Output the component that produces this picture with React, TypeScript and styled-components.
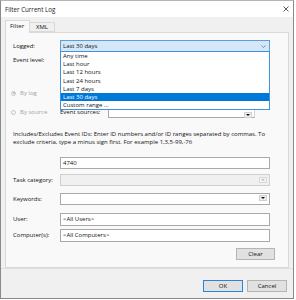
import React from 'react';
import styled, { createGlobalStyle } from 'styled-components';

const Global = createGlobalStyle`
  html, body { margin: 0; padding: 0; background: #ffffff; }
  body {
    font-family: "Open Sans", "Noto Sans", sans-serif;
    font-size: 6px;
    color: #111111;
  }
  * { box-sizing: border-box; }
`;

const Window = styled.div`
  width: 294px;
  height: 299px;
  border: 1px solid #8a8a8a;
  border-top-color: #b4b4b4;
  background: #f0f0f0;
  display: flex;
  flex-direction: column;
`;

const TitleBar = styled.div`
  height: 16px;
  background: #ffffff;
  display: flex;
  align-items: center;
  justify-content: space-between;
  padding: 0 4px 0 4px;
`;

const Title = styled.span`
  font-size: 6.2px;
  color: #222;
`;

const TabStrip = styled.div`
  display: flex;
  align-items: flex-start;
  height: 13px;
  margin-top: 3px;
  margin-bottom: -1px;
  padding-left: 4px;
  position: relative;
  z-index: 2;
`;

const Tab = styled.div<{ $active?: boolean }>`
  width: 25px;
  height: ${p => (p.$active ? 13 : 10)}px;
  margin-top: ${p => (p.$active ? 0 : 2)}px;
  border: 1px solid #d9d9d9;
  border-bottom: ${p => (p.$active ? 'none' : '1px solid #d9d9d9')};
  border-left: ${p => (p.$active ? '1px solid #d9d9d9' : 'none')};
  background: ${p => (p.$active ? '#f9f9f9' : '#f0f0f0')};
  padding-left: ${p => (p.$active ? 4 : 6)}px;
  line-height: ${p => (p.$active ? 11 : 8)}px;
`;

const Panel = styled.div`
  margin: 0 4px;
  height: 236px;
  border: 1px solid #d9d9d9;
  background: #f9f9f9;
  padding: 7px 18px 7px 7px;
  display: flex;
  flex-direction: column;
  position: relative;
  z-index: 1;
`;

const FieldRow = styled.div<{ $h: number; $mt?: number }>`
  display: grid;
  grid-template-columns: 47px 1fr;
  align-items: center;
  height: ${p => p.$h}px;
  margin-top: ${p => p.$mt ?? 0}px;
`;

const Label = styled.span<{ $disabled?: boolean }>`
  white-space: nowrap;
  color: ${p => (p.$disabled ? '#a3a3a3' : '#111111')};
`;

const ComboWrap = styled.div`
  position: relative;
  height: 100%;
`;

const ActiveCombo = styled.div`
  height: 100%;
  border: 1px solid #5e9fd9;
  background: #d3e7f8;
  display: flex;
  align-items: center;
  justify-content: space-between;
  padding: 0 3px 0 2px;
`;

const DropList = styled.ul`
  position: absolute;
  top: calc(100% - 1px);
  left: 0;
  right: 0;
  margin: 0;
  padding: 0;
  list-style: none;
  background: #ffffff;
  border: 1px solid #3f92de;
  z-index: 5;
`;

const DropItem = styled.li<{ $selected?: boolean }>`
  height: 8.2px;
  line-height: 8.2px;
  padding-left: 2px;
  background: ${p => (p.$selected ? '#0078d7' : 'transparent')};
  color: ${p => (p.$selected ? '#ffffff' : '#111111')};
  white-space: nowrap;
`;

const TextBox = styled.div<{ $disabled?: boolean }>`
  position: relative;
  height: 100%;
  border: 1px solid ${p => (p.$disabled ? '#cfcfcf' : '#a9a9a9')};
  background: ${p => (p.$disabled ? '#f0f0f0' : '#ffffff')};
  display: flex;
  align-items: center;
  padding-left: 2px;
  white-space: nowrap;
`;

const ArrowBox = styled.span<{ $disabled?: boolean; $top?: number }>`
  position: absolute;
  right: 2px;
  top: ${p => (p.$top !== undefined ? `${p.$top}px` : '50%')};
  transform: ${p => (p.$top !== undefined ? 'none' : 'translateY(-50%)')};
  width: 8px;
  height: 6px;
  background: ${p => (p.$disabled ? '#f4f4f4' : '#ececec')};
  border: 1px solid ${p => (p.$disabled ? '#d8d8d8' : '#d0d0d0')};
  display: flex;
  align-items: center;
  justify-content: center;
`;

const RadioRow = styled.div<{ $mt: number }>`
  display: grid;
  grid-template-columns: 47px 48px 1fr;
  align-items: center;
  height: 12px;
  margin-top: ${p => p.$mt}px;
`;

const RadioLabel = styled.span`
  display: flex;
  align-items: center;
  gap: 4px;
  margin-left: -2px;
  color: #a3a3a3;
  white-space: nowrap;
`;

const RadioDot = styled.span<{ $checked?: boolean }>`
  width: 5px;
  height: 5px;
  border-radius: 50%;
  border: 1px solid #c6c6c6;
  background: #f6f6f6;
  display: flex;
  align-items: center;
  justify-content: center;
  &::after {
    content: '';
    width: 2px;
    height: 2px;
    border-radius: 50%;
    background: ${p => (p.$checked ? '#b5b5b5' : 'transparent')};
  }
`;

const SourceCombo = styled.div`
  position: relative;
  height: 100%;
  width: 147px;
  border: 1px solid #a9a9a9;
  border-right-color: #d6d6d6;
  background: #ffffff;
`;

const Spacer = styled.div<{ $h: number }>`
  height: ${p => p.$h}px;
  flex: none;
`;

const Description = styled.p`
  margin: 12px 0 0 0;
  line-height: 8.4px;
  white-space: nowrap;
`;

const ClearRow = styled.div`
  display: flex;
  justify-content: flex-end;
  margin-top: 6px;
  margin-right: -5px;
  height: 12px;
`;

const Button = styled.button<{ $default?: boolean; $w?: number }>`
  width: ${p => p.$w ?? 40}px;
  height: 12px;
  padding: 0;
  font-family: inherit;
  font-size: 6px;
  color: #111111;
  background: #e1e1e1;
  border: 1px solid ${p => (p.$default ? '#2a85d8' : '#b4b4b4')};
  border-radius: 0;
  display: flex;
  align-items: center;
  justify-content: center;
`;

const Separator = styled.div`
  height: 1px;
  background: #dfdfdf;
`;

const ButtonBar = styled.div`
  display: flex;
  justify-content: flex-end;
  gap: 4px;
  padding: 11px 6px 0 0;
`;

const Chevron = () => (
  <svg width="5" height="3" viewBox="0 0 5 3">
    <path d="M0.5 0.5 L2.5 2.5 L4.5 0.5" fill="none" stroke="#6b7c8c" strokeWidth="0.8" />
  </svg>
);

const Tri = ({ color = '#111' }: { color?: string }) => (
  <svg width="4" height="2" viewBox="0 0 4 2">
    <path d="M0 0 L4 0 L2 2 Z" fill={color} />
  </svg>
);

const CloseIcon = () => (
  <svg width="6" height="6" viewBox="0 0 6 6">
    <path d="M0.5 0.5 L5.5 5.5 M5.5 0.5 L0.5 5.5" stroke="#333" strokeWidth="0.8" />
  </svg>
);

const options = ['Any time', 'Last hour', 'Last 12 hours', 'Last 24 hours', 'Last 7 days', 'Last 30 days', 'Custom range ...'];

export default function App() {
  return (
    <>
      <Global />
      <Window>
        <TitleBar>
          <Title>Filter Current Log</Title>
          <CloseIcon />
        </TitleBar>
        <TabStrip>
          <Tab $active>Filter</Tab>
          <Tab>XML</Tab>
        </TabStrip>
        <Panel>
          <FieldRow $h={12}>
            <Label>Logged:</Label>
            <ComboWrap>
              <ActiveCombo>
                <span>Last 30 days</span>
                <Chevron />
              </ActiveCombo>
              <DropList>
                {options.map(o => (
                  <DropItem key={o} $selected={o === 'Last 30 days'}>{o}</DropItem>
                ))}
              </DropList>
            </ComboWrap>
          </FieldRow>
          <FieldRow $h={10} $mt={3}>
            <Label>Event level:</Label>
            <span />
          </FieldRow>
          <Spacer $h={22} />
          <RadioRow $mt={0}>
            <RadioLabel><RadioDot $checked />By log</RadioLabel>
            <span />
            <span />
          </RadioRow>
          <RadioRow $mt={7}>
            <RadioLabel><RadioDot />By source</RadioLabel>
            <Label>Event sources:</Label>
            <SourceCombo>
              <ArrowBox $top={5}><Tri /></ArrowBox>
            </SourceCombo>
          </RadioRow>
          <Description>
            Includes/Excludes Event IDs: Enter ID numbers and/or ID ranges separated by commas. To
            <br />
            exclude criteria, type a minus sign first. For example 1,3,5-99,-76
          </Description>
          <FieldRow $h={12} $mt={10}>
            <span />
            <TextBox>4740</TextBox>
          </FieldRow>
          <FieldRow $h={12} $mt={5}>
            <Label>Task category:</Label>
            <TextBox $disabled>
              <ArrowBox $disabled><Tri color="#bdbdbd" /></ArrowBox>
            </TextBox>
          </FieldRow>
          <FieldRow $h={12} $mt={7}>
            <Label>Keywords:</Label>
            <TextBox>
              <ArrowBox $top={1}><Tri /></ArrowBox>
            </TextBox>
          </FieldRow>
          <FieldRow $h={13} $mt={8}>
            <Label>User:</Label>
            <TextBox>&lt;All Users&gt;</TextBox>
          </FieldRow>
          <FieldRow $h={13} $mt={3}>
            <Label>Computer(s):</Label>
            <TextBox>&lt;All Computers&gt;</TextBox>
          </FieldRow>
          <ClearRow>
            <Button $w={39}>Clear</Button>
          </ClearRow>
        </Panel>
        <Separator />
        <ButtonBar>
          <Button $default>OK</Button>
          <Button>Cancel</Button>
        </ButtonBar>
      </Window>
    </>
  );
}
